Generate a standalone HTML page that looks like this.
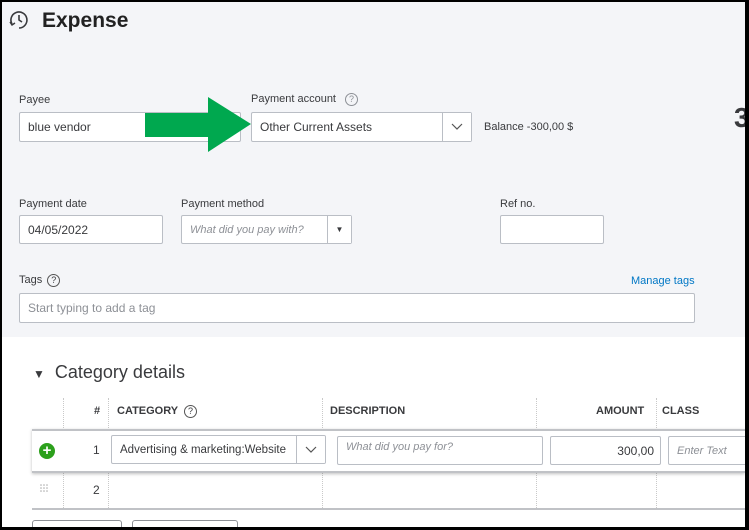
<!DOCTYPE html>
<html><head><style>
*{box-sizing:border-box;margin:0;padding:0}
body{width:749px;height:530px;background:#000;position:relative;overflow:hidden;font-family:"Liberation Sans",sans-serif;color:#393a3d}
#pg{position:absolute;left:2px;top:2px;width:743px;height:525px;background:#fff;overflow:hidden}
#top{position:absolute;left:0;top:0;width:743px;height:335px;background:#f4f5f8}
.a{position:absolute}
.lbl{font-size:11px;color:#393a3d}
.inp{position:absolute;background:#fff;border:1px solid #babec5;border-radius:2px;font-size:12px;padding-left:8px;display:flex;align-items:center}
.ph{color:#8d9096;font-style:italic;font-size:11px}
.hd{font-size:11px;font-weight:bold;color:#393a3d}
.vl{position:absolute;border-left:1px dotted #c9c9c9}
.dd{position:absolute;top:0;height:100%;border-left:1px solid #babec5;background:#fff;display:flex;align-items:center;justify-content:center}
</style></head><body>
<div id="pg">
<div id="top"></div>
<svg class="a" style="left:6px;top:7px" width="22" height="22" viewBox="0 0 22 22"><path d="M4 15 A8 8 0 1 1 11 19" fill="none" stroke="#393a3d" stroke-width="1.6"/><path d="M11 6v5l3 2" fill="none" stroke="#393a3d" stroke-width="1.6"/><path d="M2 13l2 3 3-2" fill="none" stroke="#393a3d" stroke-width="1.4"/></svg>
<div class="a" style="left:40px;top:7px;font-size:21px;font-weight:bold;color:#222">Expense</div>
<div class="a lbl" style="left:17px;top:92px">Payee</div>
<div class="inp" style="left:17px;top:110px;width:222px;height:30px">blue vendor<span class="dd" style="left:188px;width:31px"></span></div>
<div class="a lbl" style="left:249px;top:91px">Payment account <span style="display:inline-block;width:13px;height:13px;border:1px solid #8d9096;border-radius:50%;font-size:9px;text-align:center;line-height:11px;color:#8d9096;margin-left:6px">?</span></div>
<div class="inp" style="left:249px;top:110px;width:221px;height:30px">Other Current Assets<span class="dd" style="left:190px;width:29px"><svg width="12" height="8"><path d="M1 1l5 5 5-5" fill="none" stroke="#555" stroke-width="1.2"/></svg></span></div>
<div class="a" style="left:482px;top:119px;font-size:11px">Balance -300,00 $</div>
<div class="a" style="left:732px;top:100px;font-size:28px;font-weight:bold">3</div>
<svg class="a" style="left:143px;top:93px" width="108" height="60"><polygon points="0,18 63,18 63,2 106,29 63,57 63,42 0,42" fill="#00a84f"/></svg>
<div class="a lbl" style="left:17px;top:196px">Payment date</div>
<div class="inp" style="left:17px;top:213px;width:144px;height:29px">04/05/2022</div>
<div class="a lbl" style="left:179px;top:196px">Payment method</div>
<div class="inp" style="left:179px;top:213px;width:171px;height:29px"><span class="ph">What did you pay with?</span><span class="dd" style="left:145px;width:24px;font-size:8px">&#9660;</span></div>
<div class="a lbl" style="left:498px;top:196px">Ref no.</div>
<div class="inp" style="left:498px;top:213px;width:104px;height:29px"></div>
<div class="a lbl" style="left:17px;top:272px">Tags <span style="display:inline-block;width:13px;height:13px;border:1px solid #555;border-radius:50%;font-size:9px;text-align:center;line-height:11px;margin-left:2px">?</span></div>
<div class="a" style="left:629px;top:273px;font-size:11px;color:#0077c5">Manage tags</div>
<div class="inp" style="left:17px;top:291px;width:676px;height:30px"><span style="color:#8d9096;font-size:12px">Start typing to add a tag</span></div>
<div class="a" style="left:31px;top:360px;font-size:18px;color:#393a3d"><span style="font-size:12px">&#9660;</span>&nbsp; Category details</div>
<div class="vl" style="left:61px;top:396px;height:110px"></div>
<div class="vl" style="left:106px;top:396px;height:110px"></div>
<div class="vl" style="left:320px;top:396px;height:110px"></div>
<div class="vl" style="left:534px;top:396px;height:110px"></div>
<div class="vl" style="left:654px;top:396px;height:110px"></div>
<div class="a hd" style="left:92px;top:403px">#</div>
<div class="a hd" style="left:115px;top:403px">CATEGORY <span style="display:inline-block;width:13px;height:13px;border:1px solid #555;border-radius:50%;font-size:9px;text-align:center;line-height:11px;font-weight:normal;margin-left:3px">?</span></div>
<div class="a hd" style="left:328px;top:403px">DESCRIPTION</div>
<div class="a hd" style="left:594px;top:403px">AMOUNT</div>
<div class="a hd" style="left:660px;top:403px">CLASS</div>
<div class="a" style="left:30px;top:427px;width:713px;height:44px;background:#fff;border-top:2px solid #c0c2c6;border-bottom:2px solid #c0c2c6;box-shadow:0 1px 3px rgba(0,0,0,.25)"></div>
<div class="a" style="left:37px;top:441px;width:16px;height:16px;border-radius:50%;background:#2ca01c;color:#fff;font-weight:bold;font-size:15px;line-height:16px;text-align:center">+</div>
<div class="a" style="left:91px;top:441px;font-size:12px">1</div>
<div class="inp" style="left:109px;top:433px;width:215px;height:29px;white-space:nowrap;overflow:hidden;font-size:11.5px">Advertising &amp; marketing:Website<span class="dd" style="left:184px;width:29px"><svg width="12" height="8"><path d="M1 1l5 5 5-5" fill="none" stroke="#555" stroke-width="1.2"/></svg></span></div>
<div class="inp" style="left:335px;top:434px;width:206px;height:29px;align-items:flex-start;padding-top:4px"><span class="ph">What did you pay for?</span></div>
<div class="inp" style="left:548px;top:434px;width:111px;height:29px;justify-content:flex-end;padding-right:6px">300,00</div>
<div class="inp" style="left:666px;top:434px;width:90px;height:29px"><span class="ph">Enter Text</span></div>
<svg class="a" style="left:38px;top:482px" width="10" height="10"><g fill="#aaa"><circle cx="1" cy="1" r=".8"/><circle cx="4" cy="1" r=".8"/><circle cx="7" cy="1" r=".8"/><circle cx="1" cy="4" r=".8"/><circle cx="4" cy="4" r=".8"/><circle cx="7" cy="4" r=".8"/><circle cx="1" cy="7" r=".8"/><circle cx="4" cy="7" r=".8"/><circle cx="7" cy="7" r=".8"/></g></svg>
<div class="a" style="left:91px;top:481px;font-size:12px">2</div>
<div class="a" style="left:30px;top:506px;width:713px;border-top:2px solid #c0c2c6"></div>
<div class="a" style="left:30px;top:518px;width:90px;height:14px;border:1px solid #8d9096;border-radius:3px"></div>
<div class="a" style="left:130px;top:518px;width:106px;height:14px;border:1px solid #8d9096;border-radius:3px"></div>
</div>
</body></html>
